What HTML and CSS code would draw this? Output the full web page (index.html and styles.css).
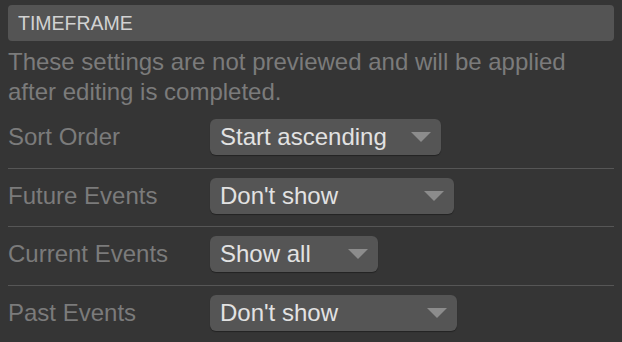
FILE: index.html
```html
<!DOCTYPE html>
<html lang="en">
<head>
<meta charset="utf-8"/>
<meta content="width=device-width, initial-scale=1.0" name="viewport"/>
<title>Timeframe</title>
<link rel="stylesheet" href="styles.css">
</head>
<body>
<div class="section-head">TIMEFRAME</div>
<p class="note">These settings are not previewed and will be applied after editing is completed.</p>
<div class="row">
  <label class="row-label">Sort Order</label>
  <div class="dropdown dd-sort">
    <span>Start ascending</span>
    <svg class="caret" width="20" height="10" viewBox="0 0 20 10"><path d="M0 0H20L10 10Z"/></svg>
  </div>
</div>
<div class="row">
  <label class="row-label">Future Events</label>
  <div class="dropdown dd-future">
    <span>Don't show</span>
    <svg class="caret" width="20" height="10" viewBox="0 0 20 10"><path d="M0 0H20L10 10Z"/></svg>
  </div>
</div>
<div class="row">
  <label class="row-label">Current Events</label>
  <div class="dropdown dd-current">
    <span>Show all</span>
    <svg class="caret" width="20" height="10" viewBox="0 0 20 10"><path d="M0 0H20L10 10Z"/></svg>
  </div>
</div>
<div class="row last">
  <label class="row-label">Past Events</label>
  <div class="dropdown dd-past">
    <span>Don't show</span>
    <svg class="caret" width="20" height="10" viewBox="0 0 20 10"><path d="M0 0H20L10 10Z"/></svg>
  </div>
</div>
</body>
</html>
```

FILE: styles.css
```css
:root {
  --bg: #353535;
  --head: #545454;
  --muted: #7b7b7b;
  --fg: #e2e2e2;
  --line: #565656;
  --ctl: #555555;
  --caret: #8c8c8c;
}
html, body {
  margin: 0;
  background: var(--bg);
}
body {
  font-family: "Liberation Sans", Arial, sans-serif;
  padding: 5px 8px 0 8px;
  color: var(--fg);
}
.section-head {
  background: var(--head);
  border-radius: 4px;
  height: 36px;
  line-height: 36px;
  padding-left: 10px;
  font-size: 19.5px;
  color: #d2d2d2;
}
.note {
  margin: 6px 0 3px 0;
  font-size: 24px;
  line-height: 30px;
  color: var(--muted);
}
.row {
  display: flex;
  align-items: center;
  padding: 9px 0 12.7px 0;
  border-bottom: 1px solid var(--line);
}
.row.last {
  border-bottom: none;
}
.row-label {
  width: 202px;
  font-size: 24px;
  color: var(--muted);
}
.dropdown {
  display: flex;
  align-items: center;
  justify-content: space-between;
  box-sizing: border-box;
  height: 36px;
  padding: 0 10px 0 10px;
  background: var(--ctl);
  border-radius: 6px;
  box-shadow: 0 1px 1px rgba(0, 0, 0, 0.35);
  font-size: 24px;
  color: var(--fg);
}
.caret {
  fill: var(--caret);
  flex-shrink: 0;
}
.dd-sort { width: 231px; }
.dd-future { width: 244px; }
.dd-current { width: 168px; }
.dd-past { width: 247px; }
```
